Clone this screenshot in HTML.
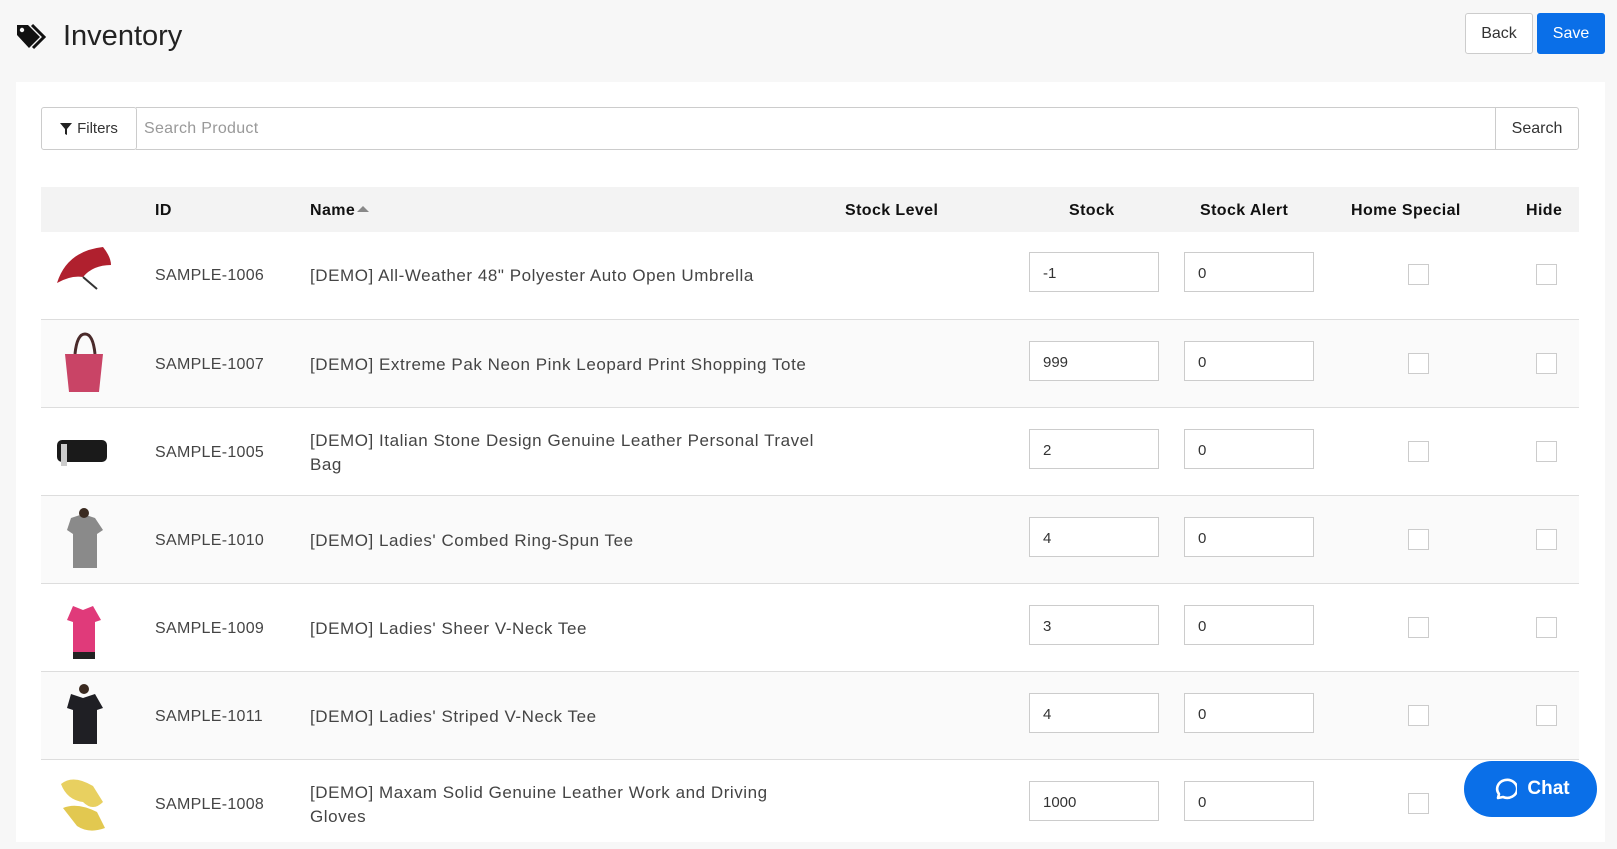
<!DOCTYPE html>
<html><head><meta charset="utf-8"><style>
*{box-sizing:border-box;margin:0;padding:0}
body{width:1617px;height:825px;overflow:hidden;background:#f7f7f7;font-family:"Liberation Sans",sans-serif;color:#444;position:relative}
.abs{position:absolute}
.btn{position:absolute;border:1px solid #ccc;border-radius:3px;background:#fff;font-size:16px;color:#333;display:flex;align-items:center;justify-content:center}
.card{position:absolute;left:16px;top:82px;width:1589px;height:760px;background:#fff}
.th{position:absolute;top:202px;font-weight:bold;font-size:16px;color:#111;letter-spacing:0.4px}
.row{position:absolute;left:41px;width:1538px;height:88px;border-top:1px solid #ddd}
.row.alt{background:#fafafa}
.id{position:absolute;left:114px;font-size:16px;letter-spacing:0.3px;top:1px;height:88px;display:flex;align-items:center}
.nm{position:absolute;left:269px;width:515px;font-size:17px;letter-spacing:0.55px;line-height:24px;top:1px;height:88px;display:flex;align-items:center}
.inp{position:absolute;top:21px;width:130px;height:40px;border:1px solid #ccc;background:#fff;font-size:15px;padding-left:13px;padding-top:2px;display:flex;align-items:center;color:#333}
.cb{position:absolute;top:33px;width:21px;height:21px;border:1px solid #ccc;background:#fff}
.img{position:absolute;left:12px;top:12px;width:63px;height:63px}
</style></head><body>
<svg class="abs" style="left:16px;top:23px" width="32" height="28" viewBox="0 0 32 28">
<path d="M1 2 L1 12 L13 25 L24 14 L12 2 Z" fill="#111"/><circle cx="6" cy="7" r="2.2" fill="#f7f7f7"/>
<path d="M16 2 L28 14 L17 25" fill="none" stroke="#111" stroke-width="3"/></svg>
<div class="abs" style="left:63px;top:20px;font-size:29px;color:#222">Inventory</div>
<div class="btn" style="left:1465px;top:13px;width:68px;height:41px">Back</div>
<div class="btn" style="left:1537px;top:13px;width:68px;height:41px;background:#0a6fe8;border-color:#0a6fe8;color:#fff">Save</div>
<div class="card"></div>
<div class="btn" style="left:41px;top:107px;width:96px;height:43px;font-size:15px"><svg width="12" height="12" viewBox="0 0 12 12" style="margin-right:5px"><path d="M0 0H12L7 6V12L5 11V6Z" fill="#222"/></svg>Filters</div>
<div class="abs" style="left:136px;top:107px;width:1360px;height:43px;border:1px solid #ccc;border-left:none;font-size:16px;letter-spacing:0.3px;color:#999;padding:12px 8px">Search Product</div>
<div class="btn" style="left:1495px;top:107px;width:84px;height:43px;border-radius:0 3px 3px 0">Search</div>
<div class="abs" style="left:41px;top:187px;width:1538px;height:45px;background:#f3f3f3"></div>
<div class="th" style="left:155px">ID</div>
<div class="th" style="left:310px">Name<span style="display:inline-block;width:0;height:0;border-left:6px solid transparent;border-right:6px solid transparent;border-bottom:6px solid #888;margin-left:2px;vertical-align:3px"></span></div>
<div class="th" style="left:845px">Stock Level</div>
<div class="th" style="left:1069px">Stock</div>
<div class="th" style="left:1200px">Stock Alert</div>
<div class="th" style="left:1351px">Home Special</div>
<div class="th" style="left:1526px">Hide</div>

<div class="row" style="top:231px;border-top:none">
<svg class="img" viewBox="0 0 63 63"><path d="M4 40 Q14 8 50 4 Q58 14 58 22 Q40 22 30 34 Q18 32 4 40Z" fill="#b0202e"/><line x1="30" y1="34" x2="44" y2="46" stroke="#333" stroke-width="2"/></svg>
<div class="id">SAMPLE-1006</div><div class="nm">[DEMO] All-Weather 48" Polyester Auto Open Umbrella</div>
<div class="inp" style="left:988px">-1</div><div class="inp" style="left:1143px">0</div>
<div class="cb" style="left:1367px"></div><div class="cb" style="left:1495px"></div></div>

<div class="row alt" style="top:319px">
<svg class="img" viewBox="0 0 63 63"><path d="M22 22 Q24 2 32 2 Q40 2 42 22" fill="none" stroke="#4a2a2a" stroke-width="3"/><path d="M12 22 H50 L46 60 H16Z" fill="#c94466"/></svg>
<div class="id">SAMPLE-1007</div><div class="nm">[DEMO] Extreme Pak Neon Pink Leopard Print Shopping Tote</div>
<div class="inp" style="left:988px">999</div><div class="inp" style="left:1143px">0</div>
<div class="cb" style="left:1367px"></div><div class="cb" style="left:1495px"></div></div>

<div class="row" style="top:407px">
<svg class="img" viewBox="0 0 63 63"><rect x="4" y="20" width="50" height="22" rx="5" fill="#1a1a1a"/><rect x="8" y="24" width="6" height="22" fill="#ccc"/></svg>
<div class="id">SAMPLE-1005</div><div class="nm">[DEMO] Italian Stone Design Genuine Leather Personal Travel Bag</div>
<div class="inp" style="left:988px">2</div><div class="inp" style="left:1143px">0</div>
<div class="cb" style="left:1367px"></div><div class="cb" style="left:1495px"></div></div>

<div class="row alt" style="top:495px">
<svg class="img" viewBox="0 0 63 63"><path d="M18 10 L30 6 L42 10 L50 22 L44 26 V60 H20 V26 L14 22Z" fill="#8a8a8a"/><circle cx="31" cy="5" r="5" fill="#3a2a20"/></svg>
<div class="id">SAMPLE-1010</div><div class="nm">[DEMO] Ladies' Combed Ring-Spun Tee</div>
<div class="inp" style="left:988px">4</div><div class="inp" style="left:1143px">0</div>
<div class="cb" style="left:1367px"></div><div class="cb" style="left:1495px"></div></div>

<div class="row" style="top:583px">
<svg class="img" viewBox="0 0 63 63"><path d="M20 10 L30 14 L40 10 L48 24 L42 26 V56 H20 V26 L14 24Z" fill="#e03a7a"/><rect x="20" y="56" width="22" height="7" fill="#222"/></svg>
<div class="id">SAMPLE-1009</div><div class="nm">[DEMO] Ladies' Sheer V-Neck Tee</div>
<div class="inp" style="left:988px">3</div><div class="inp" style="left:1143px">0</div>
<div class="cb" style="left:1367px"></div><div class="cb" style="left:1495px"></div></div>

<div class="row alt" style="top:671px">
<svg class="img" viewBox="0 0 63 63"><path d="M18 10 L30 14 L42 10 L50 24 L44 26 V60 H20 V26 L14 24Z" fill="#1f1f24"/><circle cx="31" cy="5" r="5" fill="#3a2a20"/></svg>
<div class="id">SAMPLE-1011</div><div class="nm">[DEMO] Ladies' Striped V-Neck Tee</div>
<div class="inp" style="left:988px">4</div><div class="inp" style="left:1143px">0</div>
<div class="cb" style="left:1367px"></div><div class="cb" style="left:1495px"></div></div>

<div class="row" style="top:759px">
<svg class="img" viewBox="0 0 63 63"><path d="M8 12 Q20 2 40 14 L50 30 Q40 40 30 30 Q14 28 8 12Z" fill="#e8d060"/><path d="M10 36 Q24 30 44 40 L52 56 Q36 62 24 54Z" fill="#e2c850"/></svg>
<div class="id">SAMPLE-1008</div><div class="nm">[DEMO] Maxam Solid Genuine Leather Work and Driving Gloves</div>
<div class="inp" style="left:988px">1000</div><div class="inp" style="left:1143px">0</div>
<div class="cb" style="left:1367px"></div><div class="cb" style="left:1495px"></div></div>

<div class="abs" style="left:1464px;top:761px;width:133px;height:56px;border-radius:28px;background:#0a6fe8;color:#fff;font-weight:bold;font-size:19px;display:flex;align-items:center;justify-content:center">
<svg width="26" height="26" viewBox="0 0 26 26" style="margin-right:10px"><path d="M7 22 L8 18 A10 9 0 1 1 12 21 Z" fill="none" stroke="#fff" stroke-width="2.6" stroke-linejoin="round"/></svg>Chat</div>
</body></html>
